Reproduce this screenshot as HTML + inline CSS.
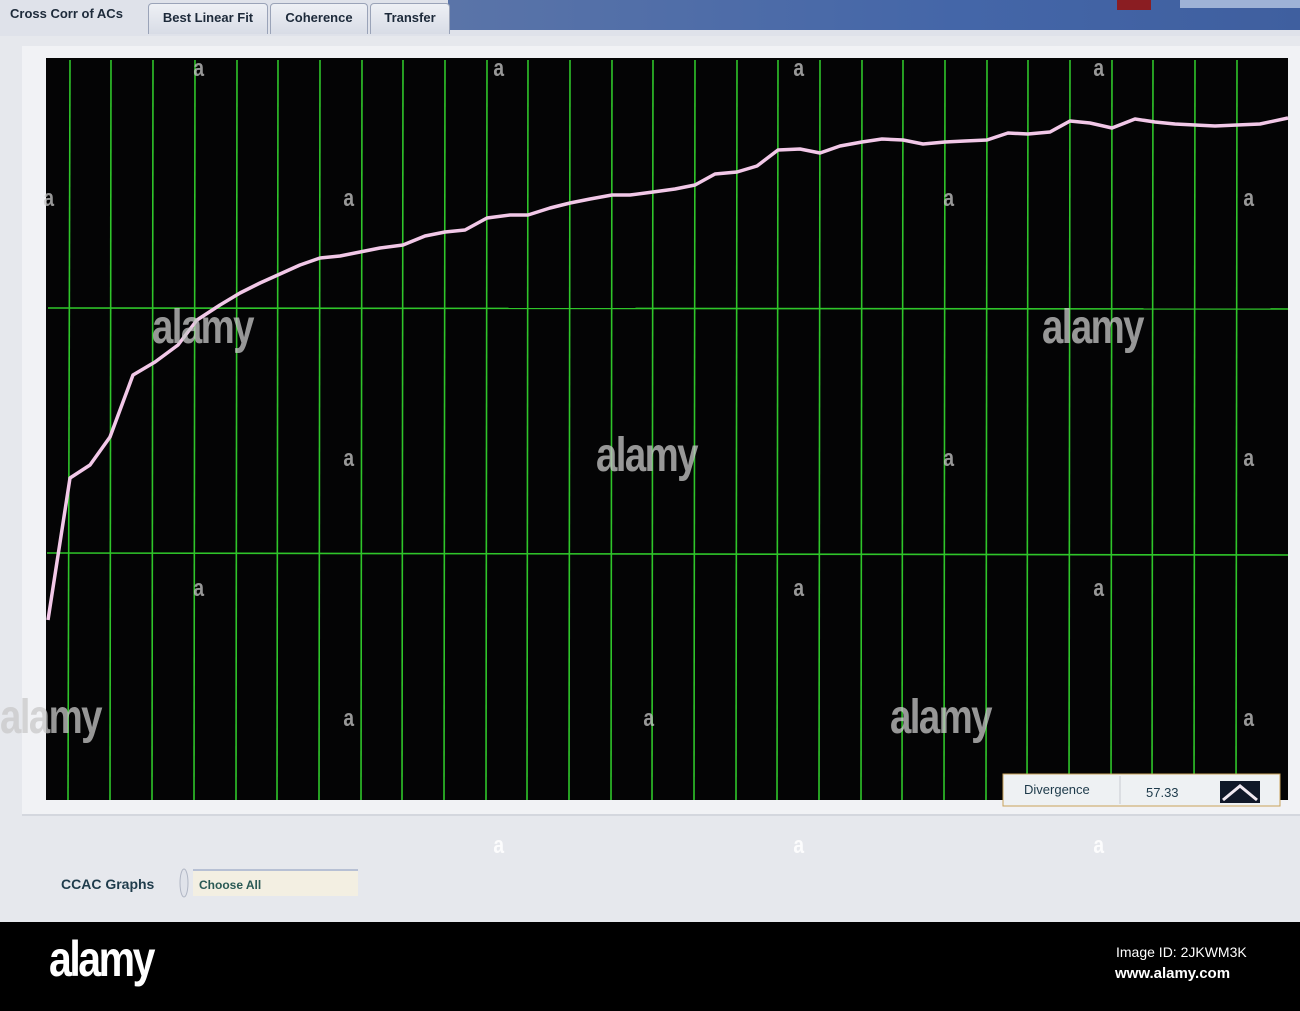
<!DOCTYPE html>
<html><head><meta charset="utf-8"><style>
html,body{margin:0;padding:0;}
body{width:1300px;height:1011px;position:relative;overflow:hidden;background:#e4e6eb;font-family:"Liberation Sans",sans-serif;}
.abs{position:absolute;}
.tab{position:absolute;top:3px;height:30px;background:linear-gradient(#eef0f5,#d8dce6);border:1px solid #9aa3b8;border-bottom:none;border-radius:4px 4px 0 0;font-weight:bold;font-size:13px;color:#1d2a3a;text-align:center;line-height:28px;}
.wm{position:absolute;color:rgba(200,200,200,0.75);font-weight:bold;font-family:"Liberation Sans",sans-serif;letter-spacing:-2px;transform:scaleX(0.8);transform-origin:0 0;}
.sa{position:absolute;color:rgba(200,200,200,0.75);font-weight:bold;font-size:24px;transform:scaleX(0.8);}
</style></head><body>
<div class="abs" style="left:0;top:0;width:1300px;height:36px;background:#dfe2ea;"></div>
<div class="abs" style="left:448px;top:0;width:852px;height:30px;background:linear-gradient(90deg,#5a74a8,#4466a8 60%,#3f5f9f);"></div>
<div class="abs" style="left:1117px;top:0;width:34px;height:10px;background:#8a1d22;"></div>
<div class="abs" style="left:1180px;top:0;width:120px;height:8px;background:#9eb2d6;"></div>
<div class="abs" style="left:10px;top:6px;font-weight:bold;font-size:13px;color:#1d2a3a;">Cross Corr of ACs</div>
<div class="tab" style="left:148px;width:118px;">Best Linear Fit</div>
<div class="tab" style="left:270px;width:96px;">Coherence</div>
<div class="tab" style="left:370px;width:78px;">Transfer</div>
<div class="abs" style="left:0;top:36px;width:1300px;height:886px;background:#e6e8ed;"></div>
<div class="abs" style="left:22px;top:46px;width:1278px;height:768px;background:#f1f2f5;border-bottom:2px solid #d4d7de;"></div>
<svg class="abs" style="left:0;top:0" width="1300" height="1011">
<rect x="46" y="58" width="1242" height="742" fill="#040405"/>
<g stroke="#2fc52a" stroke-width="1.6">
<line x1="70" y1="60" x2="68" y2="800"/><line x1="111" y1="60" x2="110" y2="800"/><line x1="153" y1="60" x2="152" y2="800"/><line x1="195" y1="60" x2="194" y2="800"/><line x1="237" y1="60" x2="236" y2="800"/><line x1="278" y1="60" x2="277" y2="800"/><line x1="320" y1="60" x2="319" y2="800"/><line x1="362" y1="60" x2="361" y2="800"/><line x1="403" y1="60" x2="402" y2="800"/><line x1="445" y1="60" x2="444" y2="800"/><line x1="487" y1="60" x2="486" y2="800"/><line x1="528" y1="60" x2="527" y2="800"/><line x1="570" y1="60" x2="569" y2="800"/><line x1="612" y1="60" x2="611" y2="800"/><line x1="653" y1="60" x2="652" y2="800"/><line x1="695" y1="60" x2="694" y2="800"/><line x1="737" y1="60" x2="736" y2="800"/><line x1="778" y1="60" x2="777" y2="800"/><line x1="820" y1="60" x2="819" y2="800"/><line x1="862" y1="60" x2="861" y2="800"/><line x1="903" y1="60" x2="902" y2="800"/><line x1="945" y1="60" x2="944" y2="800"/><line x1="987" y1="60" x2="986" y2="800"/><line x1="1028" y1="60" x2="1027" y2="800"/><line x1="1070" y1="60" x2="1069" y2="800"/><line x1="1112" y1="60" x2="1111" y2="800"/><line x1="1153" y1="60" x2="1152" y2="800"/><line x1="1195" y1="60" x2="1194" y2="800"/><line x1="1237" y1="60" x2="1236" y2="800"/>
<line x1="48" y1="308" x2="1288" y2="309"/><line x1="47" y1="553" x2="1288" y2="555"/>
</g>
<polyline fill="none" stroke="#f2c8e8" stroke-width="3.5" stroke-linejoin="round" points="48,620 70,478 90,465 110,437 133,375 155,362 178,345 197,320 220,305 240,293 260,283 280,274 300,265 320,258 340,256 360,252 380,248 403,245 425,236 445,232 465,230 487,218 510,215 528,215 550,208 570,203 590,199 612,195 630,195 653,192 675,189 695,185 715,174 737,172 757,166 778,150 800,149 820,153 840,146 862,142 882,139 903,140 923,144 945,142 965,141 987,140 1008,133 1028,134 1050,132 1070,121 1090,123 1112,128 1135,119 1155,122 1175,124 1195,125 1215,126 1237,125 1260,124 1288,118"/>
<rect x="1003" y="774" width="277" height="32" fill="#eef1f3" stroke="#c9a25a" stroke-width="1"/>
<line x1="1120" y1="776" x2="1120" y2="804" stroke="#c8ccd2"/>
<rect x="1220" y="781" width="40" height="22" fill="#101828"/>
<polyline points="1223,800 1240,786 1257,800" fill="none" stroke="#f0e8f0" stroke-width="3"/>
<text x="1024" y="794" font-family="Liberation Sans" font-size="13" fill="#1d3a4a">Divergence</text>
<text x="1146" y="797" font-family="Liberation Sans" font-size="13" fill="#1d3a4a">57.33</text>
<rect x="193" y="870" width="165" height="26" fill="#f3efe2"/>
<line x1="193" y1="870" x2="358" y2="870" stroke="#b7c0d4" stroke-width="2"/>
<ellipse cx="184" cy="883" rx="4" ry="14" fill="#e0e3ea" stroke="#b0b6c4"/>
<text x="61" y="889" font-family="Liberation Sans" font-weight="bold" font-size="14" fill="#1f3c4c">CCAC Graphs</text>
<text x="199" y="889" font-family="Liberation Sans" font-weight="bold" font-size="12" fill="#2a5a55">Choose All</text>
</svg>
<div class="wm" style="left:596px;top:428px;font-size:48px;">alamy</div>
<div class="wm" style="left:152px;top:300px;font-size:48px;">alamy</div>
<div class="wm" style="left:1042px;top:300px;font-size:48px;">alamy</div>
<div class="wm" style="left:890px;top:690px;font-size:48px;">alamy</div>
<div class="wm" style="left:0px;top:690px;font-size:48px;">alamy</div>
<div class="sa" style="left:192px;top:55px;">a</div>
<div class="sa" style="left:492px;top:55px;">a</div>
<div class="sa" style="left:792px;top:55px;">a</div>
<div class="sa" style="left:1092px;top:55px;">a</div>
<div class="sa" style="left:42px;top:185px;">a</div>
<div class="sa" style="left:342px;top:185px;">a</div>
<div class="sa" style="left:942px;top:185px;">a</div>
<div class="sa" style="left:1242px;top:185px;">a</div>
<div class="sa" style="left:342px;top:445px;">a</div>
<div class="sa" style="left:942px;top:445px;">a</div>
<div class="sa" style="left:1242px;top:445px;">a</div>
<div class="sa" style="left:192px;top:575px;">a</div>
<div class="sa" style="left:792px;top:575px;">a</div>
<div class="sa" style="left:1092px;top:575px;">a</div>
<div class="sa" style="left:342px;top:705px;">a</div>
<div class="sa" style="left:642px;top:705px;">a</div>
<div class="sa" style="left:1242px;top:705px;">a</div>
<div class="sa" style="left:492px;top:832px;color:rgba(255,255,255,0.85)">a</div>
<div class="sa" style="left:792px;top:832px;color:rgba(255,255,255,0.85)">a</div>
<div class="sa" style="left:1092px;top:832px;color:rgba(255,255,255,0.85)">a</div>
<div class="abs" style="left:0;top:922px;width:1300px;height:89px;background:#000;"></div>
<div class="abs" style="left:49px;top:930px;color:#fff;font-weight:bold;font-size:50px;letter-spacing:-3px;transform:scaleX(0.82);transform-origin:0 0;">alamy</div>
<div class="abs" style="left:1116px;top:944px;color:#fff;font-size:14px;">Image ID: 2JKWM3K</div>
<div class="abs" style="left:1115px;top:965px;color:#fff;font-size:15px;font-weight:bold;">www.alamy.com</div>
</body></html>
